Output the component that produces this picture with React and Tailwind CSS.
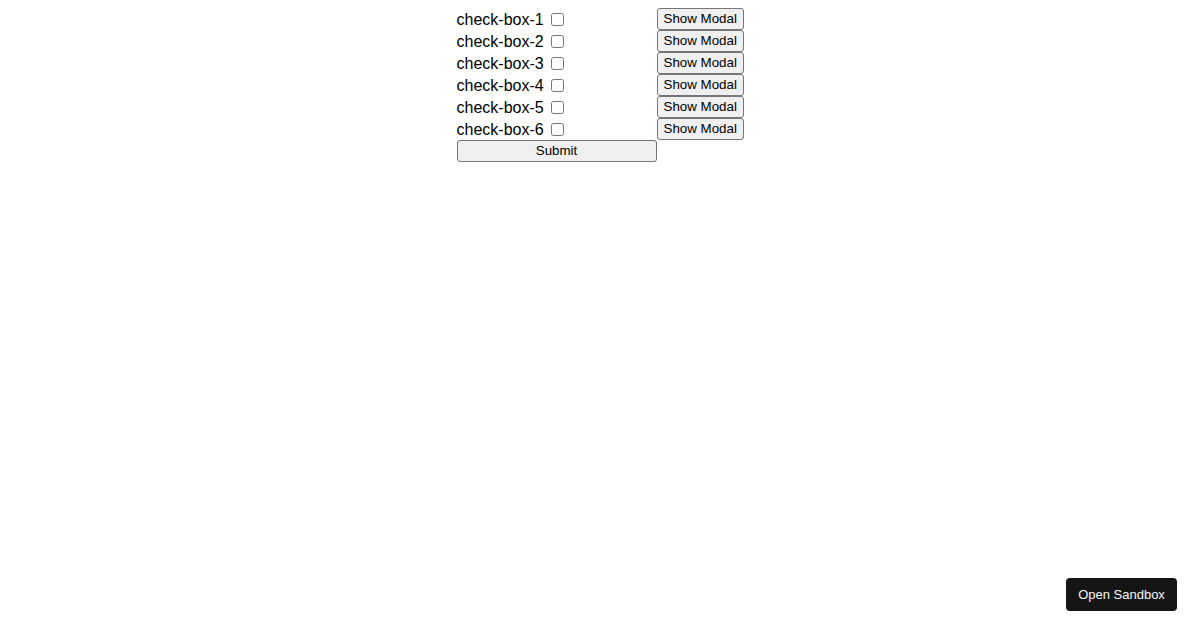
import React, { useState } from "react";

const items = [1, 2, 3, 4, 5, 6];

export default function App() {
  const [checked, setChecked] = useState({});

  const btn =
    "h-[22px] px-[6px] bg-[#efefef] border border-[#767676] rounded-[3px] text-[13.33px] leading-none text-black whitespace-nowrap shrink-0";

  return (
    <div className="relative w-[1200px] h-[630px] bg-white font-['Liberation_Sans',Arial,sans-serif] text-black">
      <div className="flex justify-center pt-2">
        <div className="flex flex-col w-[287px]">
          {items.map((i) => (
            <div key={i} className="flex items-center h-[22px]">
              <div className="flex items-center w-[200px] shrink-0 text-base pt-px">
                <span>check-box-{i}</span>
                <input
                  type="checkbox"
                  className="w-[13px] h-[13px] ml-[7px]"
                  checked={!!checked[i]}
                  onChange={(e) => setChecked({ ...checked, [i]: e.target.checked })}
                />
              </div>
              <button className={btn}>Show Modal</button>
            </div>
          ))}
          <button className={btn + " w-[200px]"}>Submit</button>
        </div>
      </div>

      <button className="absolute left-[1066px] top-[578px] w-[111px] h-[33px] rounded-[4px] bg-[#151515] text-[#f5f5f5] text-[13px]">
        Open Sandbox
      </button>
    </div>
  );
}
